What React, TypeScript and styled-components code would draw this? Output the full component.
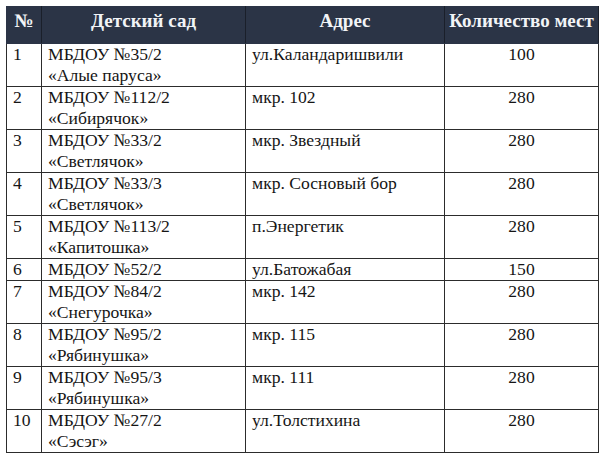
import React from 'react';
import styled, { createGlobalStyle } from 'styled-components';

const GlobalStyle = createGlobalStyle`
  html, body {
    margin: 0;
    padding: 0;
    background: #ffffff;
  }
  body {
    font-family: 'Liberation Serif', 'Times New Roman', serif;
    color: #151515;
  }
`;

const Page = styled.div`
  width: 600px;
  height: 455px;
  padding: 6px 0 0 6px;
  box-sizing: border-box;
`;

const Table = styled.table`
  border-collapse: collapse;
  table-layout: fixed;
  width: 592px;
  font-size: 17.6px;
  line-height: 21px;
  border: 1px solid #2c2c2c;
`;

const HeadRow = styled.tr`
  background: #2b3446;
  height: 37px;
`;

const HeadCell = styled.th<{ $w: number }>`
  box-sizing: border-box;
  width: ${(p) => p.$w}px;
  color: #f2f4f7;
  font-weight: bold;
  font-size: 19px;
  padding: 1px 2px 0;
  vertical-align: top;
  text-align: center;
  line-height: 26px;
  border: 1px solid #2b3446;
  border-right-color: #1a1f2a;
  white-space: nowrap;
`;

const Cell = styled.td<{ $center?: boolean }>`
  box-sizing: border-box;
  border: 1px solid #2c2c2c;
  padding: 0 6px;
  vertical-align: top;
  text-align: ${(p) => (p.$center ? 'center' : 'left')};
  white-space: nowrap;
`;

type Row = {
  n: number;
  code: string;
  name?: string;
  address: string;
  places: number;
};

const rows: Row[] = [
  { n: 1, code: 'МБДОУ №35/2', name: '«Алые паруса»', address: 'ул.Каландаришвили', places: 100 },
  { n: 2, code: 'МБДОУ №112/2', name: '«Сибирячок»', address: 'мкр. 102', places: 280 },
  { n: 3, code: 'МБДОУ №33/2', name: '«Светлячок»', address: 'мкр. Звездный', places: 280 },
  { n: 4, code: 'МБДОУ №33/3', name: '«Светлячок»', address: 'мкр. Сосновый бор', places: 280 },
  { n: 5, code: 'МБДОУ №113/2', name: '«Капитошка»', address: 'п.Энергетик', places: 280 },
  { n: 6, code: 'МБДОУ №52/2', address: 'ул.Батожабая', places: 150 },
  { n: 7, code: 'МБДОУ №84/2', name: '«Снегурочка»', address: 'мкр. 142', places: 280 },
  { n: 8, code: 'МБДОУ №95/2', name: '«Рябинушка»', address: 'мкр. 115', places: 280 },
  { n: 9, code: 'МБДОУ №95/3', name: '«Рябинушка»', address: 'мкр. 111', places: 280 },
  { n: 10, code: 'МБДОУ №27/2', name: '«Сэсэг»', address: 'ул.Толстихина', places: 280 },
];

export default function App() {
  return (
    <Page>
      <GlobalStyle />
      <Table>
        <thead>
          <HeadRow>
            <HeadCell $w={35}>№</HeadCell>
            <HeadCell $w={204}>Детский сад</HeadCell>
            <HeadCell $w={199}>Адрес</HeadCell>
            <HeadCell $w={154}>Количество мест</HeadCell>
          </HeadRow>
        </thead>
        <tbody>
          {rows.map((r) => (
            <tr key={r.n}>
              <Cell>{r.n}</Cell>
              <Cell>
                {r.code}
                {r.name && (
                  <>
                    <br />
                    {r.name}
                  </>
                )}
              </Cell>
              <Cell>{r.address}</Cell>
              <Cell $center>{r.places}</Cell>
            </tr>
          ))}
        </tbody>
      </Table>
    </Page>
  );
}
